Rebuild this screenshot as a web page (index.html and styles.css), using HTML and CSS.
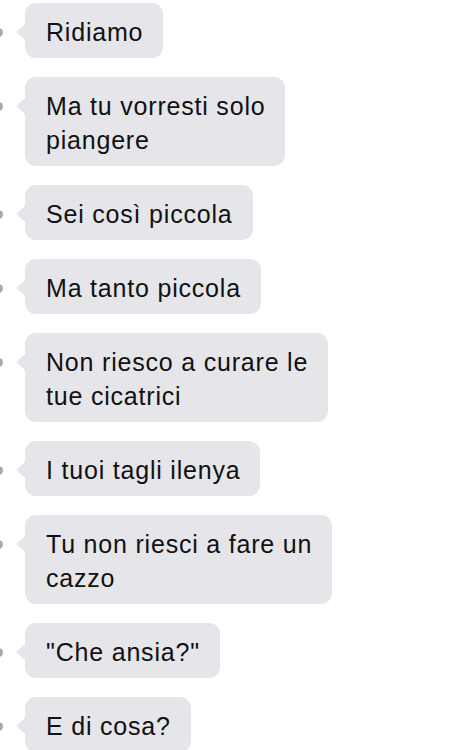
FILE: index.html
```html
<!DOCTYPE html>
<html lang="it">
<head>
<meta charset="utf-8">
<title>Messaggi</title>
<link rel="stylesheet" href="styles.css">
</head>
<body>
<div class="thread">
  <div class="row"><span class="dot"></span><div class="bubble">Ridiamo</div></div>
  <div class="row"><span class="dot"></span><div class="bubble">Ma tu vorresti solo<br>piangere</div></div>
  <div class="row"><span class="dot"></span><div class="bubble">Sei così piccola</div></div>
  <div class="row"><span class="dot"></span><div class="bubble">Ma tanto piccola</div></div>
  <div class="row"><span class="dot"></span><div class="bubble">Non riesco a curare le<br>tue cicatrici</div></div>
  <div class="row"><span class="dot"></span><div class="bubble">I tuoi tagli ilenya</div></div>
  <div class="row"><span class="dot"></span><div class="bubble">Tu non riesci a fare un<br>cazzo</div></div>
  <div class="row"><span class="dot"></span><div class="bubble">"Che ansia?"</div></div>
  <div class="row"><span class="dot"></span><div class="bubble">E di cosa?</div></div>
</div>
</body>
</html>
```
FILE: styles.css
```css
html, body {
  margin: 0;
  padding: 0;
  background: #ffffff;
}
body {
  width: 450px;
  height: 750px;
  overflow: hidden;
  font-family: "Liberation Sans", Arial, sans-serif;
}
.thread {
  display: flex;
  flex-direction: column;
  align-items: flex-start;
  gap: 19px;
  padding-top: 3px;
}
.row {
  position: relative;
  padding-left: 25px;
}
.dot {
  position: absolute;
  left: -6px;
  top: 25px;
  width: 9px;
  height: 9px;
  border-radius: 50%;
  background: #a8a8ad;
}
.bubble {
  position: relative;
  display: inline-block;
  background: #e5e5ea;
  color: #111111;
  font-size: 25px;
  line-height: 34px;
  letter-spacing: 0.8px;
  padding: 12px 20px 9px 21px;
  border-radius: 11px;
  white-space: nowrap;
}
.bubble::before {
  content: "";
  position: absolute;
  left: -9px;
  top: 21px;
  border-top: 8px solid transparent;
  border-bottom: 8px solid transparent;
  border-right: 9px solid #e5e5ea;
}
```
